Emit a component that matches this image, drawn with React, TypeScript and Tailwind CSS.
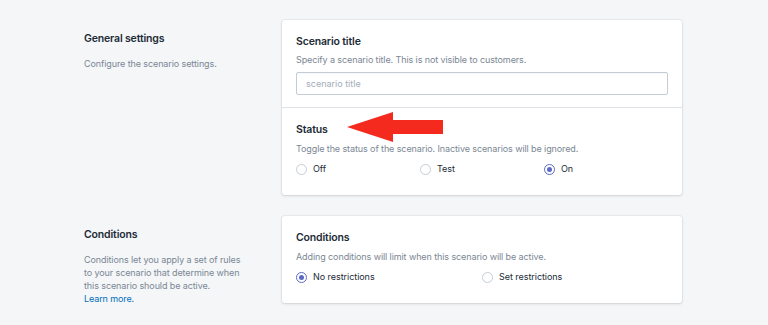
import React from 'react'

const font = { fontFamily: 'Inter, "Noto Sans", sans-serif' }

function Radio({ checked, label }: { checked?: boolean; label: string }) {
  return (
    <label className="flex items-center gap-[6px] h-[14px] text-[9px] tracking-[-0.05px] text-[#212b36]">
      <span
        className={
          'w-[11px] h-[11px] rounded-full border flex items-center justify-center bg-white ' +
          (checked ? 'border-[#5c6ac4]' : 'border-[#c4cdd5]')
        }
      >
        {checked && <span className="w-[5px] h-[5px] rounded-full bg-[#5c6ac4]" />}
      </span>
      {label}
    </label>
  )
}

const card = 'bg-white rounded-[3px] shadow-[0_0_0_1px_rgba(63,63,68,0.05),0_1px_3px_0_rgba(63,63,68,0.15)]'

export default function App() {
  return (
    <div className="relative min-h-[325px] bg-[#f4f6f8] pt-5 pl-[84px]" style={font}>
      <div className="w-[598px] flex flex-col gap-[21px]">
        {/* General settings */}
        <div className="flex">
          <div className="w-[198px] pt-3 pr-[36px]">
            <h2 className="text-[10.5px] leading-[14px] font-semibold tracking-[-0.15px] text-[#212b36]">General settings</h2>
            <p className="mt-[11px] text-[9px] leading-[14px] tracking-[-0.1px] text-[#7b8794]">Configure the scenario settings.</p>
          </div>
          <div className={'flex-1 ' + card}>
            <div className="px-[14px] pt-[15px] pb-[12px] border-b border-[#dfe3e8]">
              <h3 className="text-[10.5px] leading-[14px] font-semibold tracking-[-0.15px] text-[#212b36]">Scenario title</h3>
              <p className="mt-1 text-[9px] leading-[14px] tracking-[-0.1px] text-[#7b8794]">
                Specify a scenario title. This is not visible to customers.
              </p>
              <input
                placeholder="scenario title"
                className="mt-[5px] w-full h-[23px] px-[9px] text-[9px] border border-[#c4cdd5] rounded-[2px] placeholder:text-[#a3adb8] shadow-[inset_0_1px_0_0_rgba(99,115,129,0.05)] outline-none"
              />
            </div>
            <div className="px-[14px] pt-[15px] pb-[19px]">
              <h3 className="text-[10.5px] leading-[14px] font-semibold tracking-[-0.15px] text-[#212b36]">Status</h3>
              <p className="mt-[5px] text-[9px] leading-[14px] tracking-[-0.1px] text-[#7b8794]">
                Toggle the status of the scenario. Inactive scenarios will be ignored.
              </p>
              <div className="mt-[6px] grid grid-cols-3">
                <Radio label="Off" />
                <Radio label="Test" />
                <Radio label="On" checked />
              </div>
            </div>
          </div>
        </div>

        {/* Conditions */}
        <div className="flex">
          <div className="w-[198px] pt-3 pr-[36px]">
            <h2 className="text-[10.5px] leading-[14px] font-semibold tracking-[-0.15px] text-[#212b36]">Conditions</h2>
            <p className="mt-[11px] text-[9px] leading-[13px] tracking-[-0.1px] text-[#7b8794]">
              Conditions let you apply a set of rules to your scenario that determine when this scenario should be
              active.
              <br />
              <a className="text-[#006fbb]">Learn more.</a>
            </p>
          </div>
          <div className={'flex-1 self-start px-[14px] pt-[15px] pb-[19px] ' + card}>
            <h3 className="text-[10.5px] leading-[14px] font-semibold tracking-[-0.15px] text-[#212b36]">Conditions</h3>
            <p className="mt-[5px] text-[9px] leading-[14px] tracking-[-0.1px] text-[#7b8794]">
              Adding conditions will limit when this scenario will be active.
            </p>
            <div className="mt-[6px] grid grid-cols-2">
              <Radio label="No restrictions" checked />
              <Radio label="Set restrictions" />
            </div>
          </div>
        </div>
      </div>

      <svg className="absolute left-[347px] top-[112px]" width="97" height="31" viewBox="0 0 97 31">
        <polygon points="0,15 46,0 46,8 96,8 96,22 46,22 46,30" fill="#f42a1e" />
      </svg>
    </div>
  )
}
